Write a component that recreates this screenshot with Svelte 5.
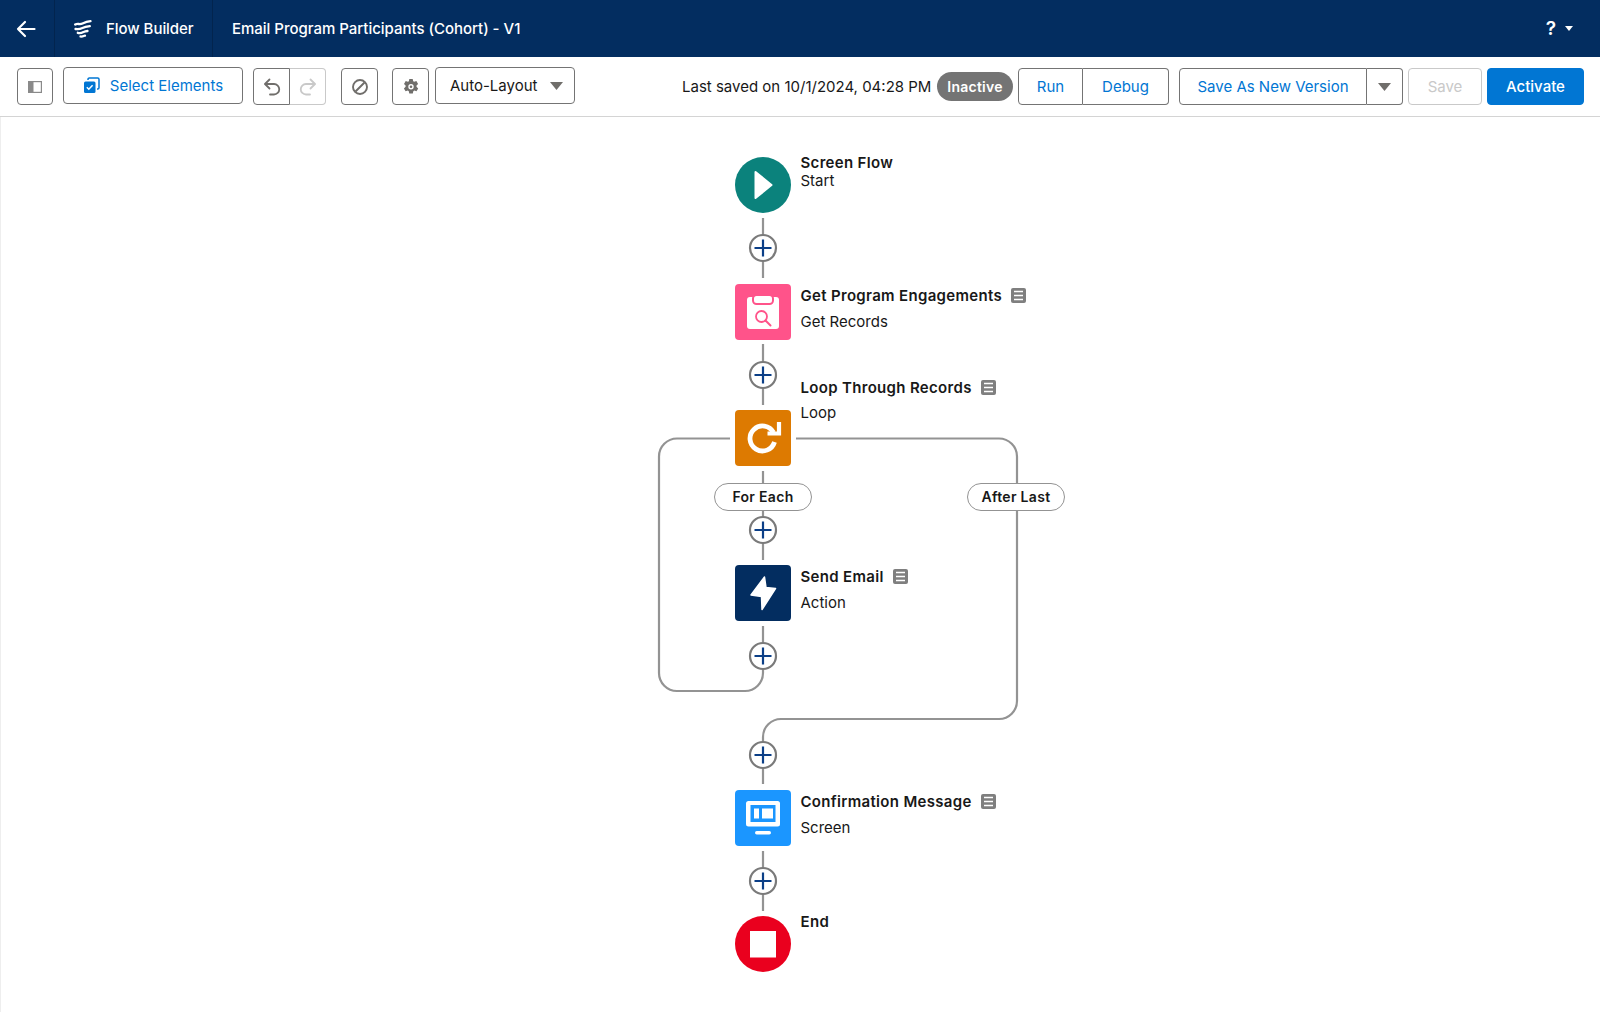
<script lang="ts">
	// all flow coordinates are page y, TOP is where the canvas starts
	const TOP = 117;
	const nodes = [
		{ id: 'start', y: 157, round: true, color: '#0b827c' },
		{ id: 'get', y: 283.5, round: false, color: '#ff538a' },
		{ id: 'loop', y: 410, round: false, color: '#dd7a01' },
		{ id: 'send', y: 565, round: false, color: '#032d60' },
		{ id: 'screen', y: 790, round: false, color: '#1b96ff' },
		{ id: 'end', y: 916, round: true, color: '#ea001e' }
	];
	const labels = [
		{ title: 'Screen Flow', sub: 'Start', y: 152, tight: true, doc: false },
		{ title: 'Get Program Engagements', sub: 'Get Records', y: 285.5, tight: false, doc: true },
		{ title: 'Loop Through Records', sub: 'Loop', y: 377, tight: false, doc: true },
		{ title: 'Send Email', sub: 'Action', y: 566.5, tight: false, doc: true },
		{ title: 'Confirmation Message', sub: 'Screen', y: 791.5, tight: false, doc: true },
		{ title: 'End', sub: '', y: 911.5, tight: false, doc: false }
	];
	const pluses = [248, 375, 530, 656, 755, 881];
	const pills = [
		{ text: 'For Each', x: 714 },
		{ text: 'After Last', x: 967 }
	];
</script>

<div class="app">
	<header class="topbar">
		<button class="back" aria-label="Back">
			<svg width="20" height="18" viewBox="0 0 20 18" fill="none" stroke="#fff" stroke-width="2.2" stroke-linecap="round" stroke-linejoin="round">
				<path d="M18.5 9H2M9 2 2 9l7 7" />
			</svg>
		</button>
		<div class="brand">
			<svg width="18" height="18" viewBox="0 0 18 18" fill="none" stroke="#fff" stroke-width="2.300" stroke-linecap="round">
				<path d="M1.200 4.500C4 3 5.500 5 8.500 3.500 11 2.300 13 1.500 16.500 1.200" />
				<path d="M1.500 9C4.500 9.500 6 9.200 8.500 8 10.500 7 13 6.500 15.800 6.200" />
				<path d="M3.800 12.800C6 13.500 7.500 13 9.500 12 10.800 11.500 12 11.200 13.500 11" />
				<path d="M6.500 16.500C7.800 16.800 9 16.300 11 15.600" />
			</svg>
			<span>Flow Builder</span>
		</div>
		<div class="flow-name">Email Program Participants (Cohort) - V1</div>
		<div class="help">
			<span class="q">?</span>
			<svg width="8" height="5" viewBox="0 0 8 5"><path d="M0 0h8L4 5z" fill="#fff" /></svg>
		</div>
	</header>

	<div class="toolbar">
		<button class="btn icon panel" aria-label="Toggle panel">
			<svg width="14" height="12" viewBox="0 0 14 12">
				<rect x=".6" y=".6" width="12.800" height="10.800" fill="#fff" stroke="#8a8a8a" stroke-width="1.200" />
				<rect x="1" y="1" width="4.500" height="10" fill="#8a8a8a" />
			</svg>
		</button>
		<button class="btn select">
			<svg width="17" height="17" viewBox="0 0 17 17">
				<path d="M5 3V2a1.300 1.300 0 0 1 1.300-1h8.400A1.300 1.300 0 0 1 16 2.300v8.400a1.300 1.300 0 0 1-1.300 1.300H14" fill="none" stroke="#0176d3" stroke-width="1.500" />
				<rect x="1" y="4.500" width="11.500" height="11.500" rx="1.500" fill="#0176d3" />
				<path d="m3.800 10.300 2 2 3.800-4" fill="none" stroke="#fff" stroke-width="1.500" />
			</svg>
			Select Elements
		</button>
		<div class="group undo">
			<button class="btn icon" aria-label="Undo">
				<svg width="18" height="18" viewBox="0 0 18 18" fill="none" stroke="#706e6b" stroke-width="1.800" stroke-linecap="round" stroke-linejoin="round">
					<path d="M6.500 1.500 2 6l4.500 4.500" />
					<path d="M2.500 6H11a5 5 0 0 1 0 10.500H7" />
				</svg>
			</button>
			<button class="btn icon off" aria-label="Redo">
				<svg width="18" height="18" viewBox="0 0 18 18" fill="none" stroke="#c9c9c9" stroke-width="1.800" stroke-linecap="round" stroke-linejoin="round">
					<path d="M11.500 1.500 16 6l-4.500 4.500" />
					<path d="M15.500 6H7a5 5 0 0 0 0 10.500h4" />
				</svg>
			</button>
		</div>
		<button class="btn icon block" aria-label="Fault paths">
			<svg width="18" height="18" viewBox="0 0 18 18" fill="none" stroke="#706e6b" stroke-width="1.900">
				<circle cx="9" cy="9" r="7" />
				<path d="m4.500 13.500 9-9" />
			</svg>
		</button>
		<button class="btn icon gear" aria-label="Settings">
			<svg width="16" height="16" viewBox="0 0 16 16">
				<path fill="#706e6b" fill-rule="evenodd" d="M6.300 0h3.400l.5 2.200 1 .6 2.200-.7L15.100 5l-1.600 1.600v1.200l1.700 1.600-1.700 2.900-2.200-.7-1 .6-.5 2.300H6.300l-.5-2.300-1-.6-2.200.7L.9 9.400l1.700-1.600V6.600L1 5l1.700-2.900 2.200.7 1-.6zM8 5a2.700 2.700 0 1 0 0 5.400A2.700 2.700 0 0 0 8 5z" />
				<circle cx="8" cy="7.700" r="1.300" fill="#706e6b" />
			</svg>
		</button>
		<button class="btn mode">
			Auto-Layout
			<svg width="13" height="8" viewBox="0 0 13 8"><path d="M0 0h13L6.500 8z" fill="#706e6b" /></svg>
		</button>

		<div class="right">
			<span class="saved">Last saved on 10/1/2024, 04:28 PM</span>
			<span class="status">Inactive</span>
			<div class="group run">
				<button class="btn link">Run</button>
				<button class="btn link">Debug</button>
			</div>
			<div class="group save-new">
				<button class="btn link">Save As New Version</button>
				<button class="btn icon" aria-label="More save options">
					<svg width="13" height="8" viewBox="0 0 13 8"><path d="M0 0h13L6.500 8z" fill="#706e6b" /></svg>
				</button>
			</div>
			<button class="btn save" disabled>Save</button>
			<button class="btn activate">Activate</button>
		</div>
	</div>

	<main class="canvas">
		<svg class="wires" width="1600" height="895" viewBox="0 {TOP} 1600 895" fill="none" stroke="#939393" stroke-width="2.200">
			<path d="M763 218v60M763 344v61M763 471v89M763 626v30" />
			<path d="M763 737v47M763 851v60" />
			<path d="M730 438.500H677a18 18 0 0 0-18 18V673a18 18 0 0 0 18 18h68a18 18 0 0 0 18-18v-17" />
			<path d="M796 438.500h203a18 18 0 0 1 18 18V701a18 18 0 0 1-18 18H781a18 18 0 0 0-18 18" />
			{#each pluses as py}
				<circle cx="763" cy={py} r="13" fill="#fff" stroke="#7a7a7a" />
				<path d="M754.500 {py}h17M763 {py - 8.500}v17" stroke="#0b3f87" />
			{/each}
		</svg>

		{#each pills as p}
			<div class="pill" style="left:{p.x}px; top:{483 - TOP}px">{p.text}</div>
		{/each}

		{#each nodes as n}
			<div class="node" class:round={n.round} style="top:{n.y - TOP}px; background:{n.color}">
				<svg width="56" height="56" viewBox="0 0 56 56">
					{#if n.id === 'start'}
						<path d="M20.500 15 36.500 28 20.500 41z" fill="#fff" stroke="#fff" stroke-width="2" stroke-linejoin="round" />
					{:else if n.id === 'get'}
						<rect x="12" y="13" width="32" height="32" rx="3" fill="#fff" />
						<rect x="18" y="11" width="20" height="9" rx="3.500" fill="#fff" stroke={n.color} stroke-width="2" />
						<circle cx="26.500" cy="32.500" r="5.500" fill="none" stroke={n.color} stroke-width="1.800" />
						<path d="m30.500 36.500 5 5" stroke={n.color} stroke-width="2" stroke-linecap="round" />
					{:else if n.id === 'loop'}
						<path d="M38.500 22.500A12.500 12.500 0 1 0 39.500 32" fill="none" stroke="#fff" stroke-width="4.800" />
						<path d="M44 12v11.500H32.500" fill="none" stroke="#fff" stroke-width="4.200" />
					{:else if n.id === 'send'}
						<path d="M29.500 12 16 30l10.500 1.500L27 44.500 40.500 23.500 31 22.500z" fill="#fff" stroke="#fff" stroke-width="1.500" stroke-linejoin="round" />
					{:else if n.id === 'screen'}
						<rect x="11" y="11" width="34" height="25.500" rx="2.500" fill="#fff" />
						<rect x="15.500" y="15" width="25" height="17" fill={n.color} />
						<rect x="19" y="18.500" width="5" height="10" fill="#fff" />
						<rect x="27" y="18.500" width="11" height="10" fill="#fff" />
						<rect x="20" y="41" width="16" height="3.500" rx="1.700" fill="#fff" />
					{:else}
						<rect x="15" y="15" width="26" height="26.500" fill="#fff" />
					{/if}
				</svg>
			</div>
		{/each}

		{#each labels as l}
			<div class="label" style="top:{l.y - TOP}px">
				<div class="title">
					{l.title}
					{#if l.doc}
						<svg width="15" height="15" viewBox="0 0 15 15">
							<rect width="15" height="15" rx="2" fill="#7f7f7f" />
							<path d="M3 3.500h9M3 7.500h9M3 11.500h9" stroke="#fff" stroke-width="1.700" />
						</svg>
					{/if}
				</div>
				{#if l.sub}
					<div class="sub" class:tight={l.tight}>{l.sub}</div>
				{/if}
			</div>
		{/each}
	</main>
</div>

<style>
	:global(body) {
		font-family: Inter, 'Liberation Sans', sans-serif;
		background: #fff;
		color: #181818;
	}

	.app {
		display: flex;
		flex-direction: column;
		height: 1012px;
		overflow: hidden;
	}

	button {
		font: inherit;
		cursor: pointer;
	}

	.topbar {
		display: flex;
		align-items: center;
		height: 57px;
		flex-shrink: 0;
		background: #032d60;
		color: #fff;
		font-size: 15px;
		font-weight: 500;
	}

	.back {
		display: flex;
		align-items: center;
		justify-content: center;
		width: 55px;
		height: 100%;
		padding: 0 3px 0 0;
		background: none;
		border: none;
		border-right: 1px solid #02244e;
	}

	.brand {
		display: flex;
		align-items: center;
		gap: 14px;
		width: 158px;
		height: 100%;
		padding-left: 19px;
		box-sizing: border-box;
		border-right: 1px solid #02244e;
	}

	.brand span {
		letter-spacing: -0.05px;
	}

	.flow-name {
		padding-left: 19px;
		letter-spacing: -0.02px;
	}

	.help {
		display: flex;
		align-items: center;
		gap: 9px;
		margin-left: auto;
		padding-right: 27px;
	}

	.q {
		font-size: 19px;
		font-weight: 600;
	}

	.toolbar {
		display: flex;
		align-items: center;
		height: 60px;
		flex-shrink: 0;
		padding: 0 16px 0 17px;
		box-sizing: border-box;
		border-bottom: 1px solid #d4d4d4;
		font-size: 15px;
	}

	.btn {
		display: flex;
		align-items: center;
		justify-content: center;
		height: 37px;
		box-sizing: border-box;
		background: #fff;
		border: 1px solid #747474;
		border-radius: 4px;
		padding: 0;
	}

	.icon {
		width: 37px;
	}

	.panel {
		width: 36px;
	}

	.select {
		width: 180px;
		margin: 0 0 2px 10px;
		gap: 10px;
		color: #0176d3;
	}

	.group {
		display: flex;
	}

	.group .btn:first-child {
		border-radius: 4px 0 0 4px;
	}

	.group .btn:last-child {
		border-radius: 0 4px 4px 0;
		border-left: none;
	}

	.undo {
		margin-left: 10px;
	}

	.off {
		width: 36px;
		border-color: #c9c9c9;
	}

	.undo .off {
		border-left: none;
	}

	.block {
		margin-left: 15px;
	}

	.gear {
		margin-left: 14px;
	}

	.mode {
		width: 140px;
		margin: 0 0 2px 6px;
		padding: 0 11px 0 14px;
		justify-content: space-between;
		color: #181818;
	}

	.right {
		display: flex;
		align-items: center;
		margin-left: auto;
	}

	.saved {
		width: 249px;
		white-space: nowrap;
	}

	.status {
		display: flex;
		align-items: center;
		justify-content: center;
		width: 76px;
		height: 29px;
		margin-left: 6px;
		border-radius: 15px;
		background: #747474;
		color: #fff;
		font-size: 14px;
		font-weight: 600;
		letter-spacing: 0.25px;
	}

	.link {
		color: #0176d3;
	}

	.run {
		margin-left: 5px;
	}

	.run .btn:first-child {
		width: 65px;
	}

	.run .btn:last-child {
		width: 86px;
	}

	.save-new {
		margin-left: 10px;
	}

	.save-new .link {
		width: 188px;
	}

	.save-new .icon {
		width: 36px;
	}

	.save {
		width: 74px;
		margin-left: 5px;
		border-color: #c9c9c9;
		color: #c9c9c9;
		cursor: default;
	}

	.activate {
		width: 97px;
		margin-left: 5px;
		background: #0176d3;
		border-color: #0176d3;
		color: #fff;
		font-weight: 500;
	}

	/* free canvas: everything in here sits at flow coordinates */
	.canvas {
		position: relative;
		flex: 1;
		box-shadow: inset 1px 0 #eeeeee;
	}

	.wires {
		position: absolute;
		left: 0;
		top: 0;
	}

	.node {
		position: absolute;
		left: 735px;
		width: 56px;
		height: 56px;
		border-radius: 4px;
	}

	.node.round {
		border-radius: 50%;
	}

	.node svg {
		display: block;
	}

	.pill {
		position: absolute;
		width: 98px;
		height: 27.500px;
		box-sizing: border-box;
		display: flex;
		align-items: center;
		justify-content: center;
		background: #fff;
		border: 1px solid #939393;
		border-radius: 14px;
		font-size: 14px;
		font-weight: 600;
		letter-spacing: 0.3px;
	}

	.label {
		position: absolute;
		left: 800.5px;
		white-space: nowrap;
		font-size: 15px;
	}

	.title {
		display: flex;
		align-items: center;
		gap: 9px;
		height: 20px;
		font-weight: 600;
		letter-spacing: 0.32px;
	}

	.sub {
		height: 20px;
		line-height: 20px;
		margin-top: 6px;
	}

	.sub.tight {
		margin-top: -1px;
	}
</style>
